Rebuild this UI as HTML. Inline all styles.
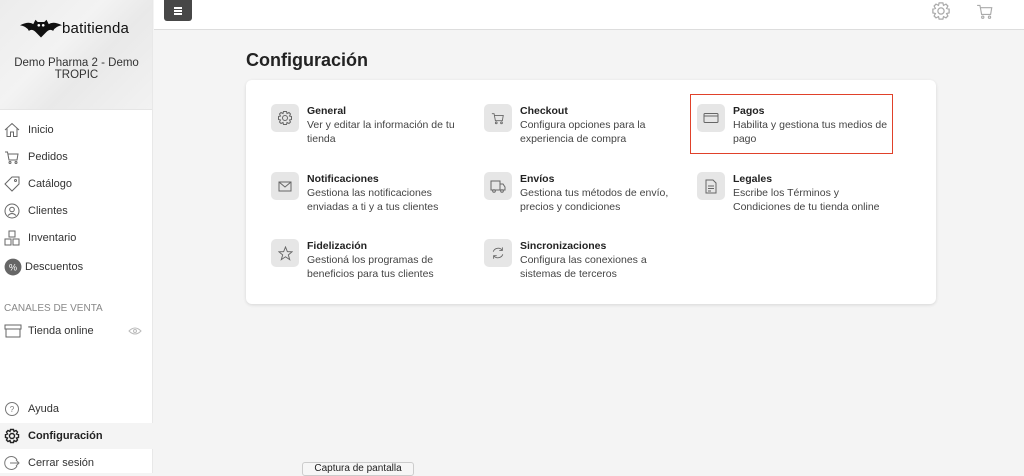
<!DOCTYPE html>
<html><head><meta charset="utf-8"><style>
*{box-sizing:border-box;margin:0;padding:0}
body{width:1024px;height:473px;overflow:hidden;background:#f4f4f4;font-family:"Liberation Sans",sans-serif;position:relative;color:#333}
.side{position:absolute;left:0;top:0;width:153px;height:473px;background:#fff;border-right:1px solid #e8e8e8}
.logo{height:110px;background:linear-gradient(135deg,#ececec 0%,#f3f3f3 40%,#e9e9e9 60%,#f2f2f2 100%);position:relative;border-bottom:1px solid #e5e5e5}
.logo .name{position:absolute;left:62px;top:20px;font-size:15px;color:#111;letter-spacing:.2px}
.logo .store{position:absolute;left:0;width:153px;top:57px;text-align:center;font-size:11.5px;color:#333;line-height:12px}
.nav{position:absolute;left:0;font-size:11px;color:#333;width:153px;height:26px;display:flex;align-items:center}
.nav svg{position:absolute;left:4px}
.nav span{position:absolute;left:28px}
.hdr{position:absolute;left:154px;top:0;right:0;height:30px;background:#fff;border-bottom:1px solid #ddd}
.ham{position:absolute;left:164px;top:0;width:28px;height:21px;background:#474747;border-radius:0 0 3px 3px}
.ham i{position:absolute;left:10px;width:8px;height:1.5px;background:#fff}
h1{position:absolute;left:246px;top:50px;font-size:18px;font-weight:bold;color:#222}
.card{position:absolute;left:246px;top:80px;width:690px;height:224px;background:#fff;border-radius:6px;box-shadow:0 1px 3px rgba(0,0,0,.12)}
.it{position:absolute;width:200px}
.ic{position:absolute;left:0;top:0;width:28px;height:28px;background:#e6e6e6;border-radius:5px;display:flex;align-items:center;justify-content:center}
.tx{position:absolute;left:36px;top:0;font-size:10.5px;line-height:14px;color:#444;width:165px}
.tx b{display:block;color:#222;font-size:10.5px}
.red{position:absolute;left:690px;top:94px;width:203px;height:60px;border:1.5px solid #e0412a}
.tip{position:absolute;left:302px;top:462px;width:112px;height:14px;background:#f6f6f6;border:1px solid #ccc;border-radius:3px;font-size:10px;text-align:center;color:#222}
</style></head><body>
<div class="side">
 <div class="logo">
  <svg style="position:absolute;left:20px;top:16px" width="42" height="23" viewBox="0 0 38 20"><path d="M0 8 Q8 4 12 7 L14 3 L16 5 L22 5 L24 3 L26 7 Q30 4 38 8 Q32 9 30 13 Q27 11 24 14 L19 19 L14 14 Q11 11 8 13 Q6 9 0 8Z" fill="#111"/><circle cx="17" cy="8" r="1.2" fill="#fff"/><circle cx="21" cy="8" r="1.2" fill="#fff"/></svg>
  <div class="name">batitienda</div>
  <div class="store">Demo Pharma 2 - Demo<br>TROPIC</div>
 </div>
 <div class="nav" style="top:117px"><svg width="16" height="16" viewBox="0 0 16 16" fill="none" stroke="#666"><path d="M1 8 L8 1.5 L15 8 M3 6.5 V14.5 H6.5 V10 H9.5 V14.5 H13 V6.5"/></svg><span>Inicio</span></div>
 <div class="nav" style="top:144px"><svg width="16" height="16" viewBox="0 0 16 16" fill="none" stroke="#666"><path d="M1 3 H3.5 L5 11 H13 L14 5 H4"/><circle cx="6" cy="13.5" r="1"/><circle cx="12" cy="13.5" r="1"/></svg><span>Pedidos</span></div>
 <div class="nav" style="top:171px"><svg width="16" height="16" viewBox="0 0 16 16" fill="none" stroke="#666"><path d="M1 8 L8 1 H15 V8 L8 15Z"/><circle cx="11.5" cy="4.5" r="1"/></svg><span>Catálogo</span></div>
 <div class="nav" style="top:198px"><svg width="16" height="16" viewBox="0 0 16 16" fill="none" stroke="#666"><circle cx="8" cy="8" r="7"/><circle cx="8" cy="6.5" r="2.3"/><path d="M4 12.5 Q8 8.5 12 12.5"/></svg><span>Clientes</span></div>
 <div class="nav" style="top:225px"><svg width="16" height="16" viewBox="0 0 16 16" fill="none" stroke="#666"><rect x="5" y="1" width="6" height="6"/><rect x="1" y="9" width="6" height="6"/><rect x="9" y="9" width="6" height="6"/></svg><span>Inventario</span></div>
 <div class="nav" style="top:254px"><svg width="18" height="18" viewBox="0 0 16 16"><circle cx="8" cy="8" r="7.5" fill="#666"/><text x="8" y="11" font-size="8" fill="#fff" text-anchor="middle" font-family="Liberation Sans">%</text></svg><span style="left:25px">Descuentos</span></div>
 <div style="position:absolute;left:4px;top:303px;font-size:10px;color:#888">CANALES DE VENTA</div>
 <div class="nav" style="top:318px"><svg width="18" height="16" viewBox="0 0 18 16" fill="none" stroke="#666"><rect x="1" y="2" width="16" height="4"/><path d="M2 6 V14 H16 V6"/></svg><span>Tienda online</span><svg style="left:128px" width="14" height="10" viewBox="0 0 14 10" fill="none" stroke="#bbb"><path d="M1 5 Q7 -1 13 5 Q7 11 1 5Z"/><circle cx="7" cy="5" r="1.5"/></svg></div>
 <div class="nav" style="top:396px"><svg width="16" height="16" viewBox="0 0 16 16" fill="none" stroke="#777"><circle cx="8" cy="8" r="6.5"/><text x="8" y="11" font-size="8" fill="#777" stroke="none" text-anchor="middle" font-family="Liberation Sans">?</text></svg><span>Ayuda</span></div>
 <div class="nav" style="top:423px;background:#f4f4f4;font-weight:bold;color:#222"><svg width="16" height="16" viewBox="0 0 16 16" fill="none" stroke="#222" stroke-width="1.4"><circle cx="8" cy="8" r="2.5"/><path d="M6.5 1.5 H9.5 L10 3.5 L12 2.5 L13.5 4 L12.5 6 L14.5 6.5 V9.5 L12.5 10 L13.5 12 L12 13.5 L10 12.5 L9.5 14.5 H6.5 L6 12.5 L4 13.5 L2.5 12 L3.5 10 L1.5 9.5 V6.5 L3.5 6 L2.5 4 L4 2.5 L6 3.5Z"/></svg><span>Configuración</span></div>
 <div class="nav" style="top:450px"><svg width="16" height="16" viewBox="0 0 16 16" fill="none" stroke="#777"><path d="M13 5 A6.5 6.5 0 1 0 13 11 M6 8 H15 M12 5 L15 8 L12 11"/></svg><span>Cerrar sesión</span></div>
</div>
<div class="hdr">
 <svg style="position:absolute;left:777px;top:1px" width="20" height="20" viewBox="0 0 16 16" fill="none" stroke="#aaa"><circle cx="8" cy="8" r="2.5"/><path d="M6.5 1.5 H9.5 L10 3.5 L12 2.5 L13.5 4 L12.5 6 L14.5 6.5 V9.5 L12.5 10 L13.5 12 L12 13.5 L10 12.5 L9.5 14.5 H6.5 L6 12.5 L4 13.5 L2.5 12 L3.5 10 L1.5 9.5 V6.5 L3.5 6 L2.5 4 L4 2.5 L6 3.5Z"/></svg>
 <svg style="position:absolute;left:822px;top:2px" width="18" height="18" viewBox="0 0 16 16" fill="none" stroke="#aaa"><path d="M1 3 H3.5 L5 11 H13 L14 5 H4"/><circle cx="6" cy="13.5" r="1"/><circle cx="12" cy="13.5" r="1"/></svg>
</div>
<div class="ham"><i style="top:7px"></i><i style="top:10px"></i><i style="top:13px"></i></div>
<h1>Configuración</h1>
<div class="card">
 <div class="it" style="left:25px;top:24px"><div class="ic"><svg width="16" height="16" viewBox="0 0 16 16" fill="none" stroke="#666"><circle cx="8" cy="8" r="2.5"/><path d="M6.5 1.5 H9.5 L10 3.5 L12 2.5 L13.5 4 L12.5 6 L14.5 6.5 V9.5 L12.5 10 L13.5 12 L12 13.5 L10 12.5 L9.5 14.5 H6.5 L6 12.5 L4 13.5 L2.5 12 L3.5 10 L1.5 9.5 V6.5 L3.5 6 L2.5 4 L4 2.5 L6 3.5Z"/></svg></div><div class="tx"><b>General</b>Ver y editar la información de tu tienda</div></div>
 <div class="it" style="left:238px;top:24px"><div class="ic"><svg width="14" height="14" viewBox="0 0 16 16" fill="none" stroke="#666"><path d="M1 3 H3.5 L5 11 H13 L14 5 H4"/><circle cx="6" cy="13.5" r="1"/><circle cx="12" cy="13.5" r="1"/></svg></div><div class="tx"><b>Checkout</b>Configura opciones para la experiencia de compra</div></div>
 <div class="it" style="left:451px;top:24px"><div class="ic"><svg width="16" height="12" viewBox="0 0 16 12" fill="none" stroke="#666"><rect x="1" y="1.5" width="14" height="9" rx="1"/><path d="M1 4 H15"/></svg></div><div class="tx"><b>Pagos</b>Habilita y gestiona tus medios de pago</div></div>
 <div class="it" style="left:25px;top:92px"><div class="ic"><svg width="14" height="11" viewBox="0 0 14 11" fill="none" stroke="#666"><rect x="1" y="1" width="12" height="9"/><path d="M1 1 L7 6 L13 1"/></svg></div><div class="tx"><b>Notificaciones</b>Gestiona las notificaciones enviadas a ti y a tus clientes</div></div>
 <div class="it" style="left:238px;top:92px"><div class="ic"><svg width="16" height="13" viewBox="0 0 16 13" fill="none" stroke="#666"><path d="M1 1 H10 V10 H1Z M10 4 H13 L15 7 V10 H10"/><circle cx="4" cy="11" r="1.3" fill="#e6e6e6"/><circle cx="12" cy="11" r="1.3" fill="#e6e6e6"/></svg></div><div class="tx"><b>Envíos</b>Gestiona tus métodos de envío, precios y condiciones</div></div>
 <div class="it" style="left:451px;top:92px"><div class="ic"><svg width="12" height="15" viewBox="0 0 12 15" fill="none" stroke="#666"><path d="M1 1 H8 L11 4 V14 H1Z M3 7 H9 M3 9.5 H9 M3 12 H6"/></svg></div><div class="tx"><b>Legales</b>Escribe los Términos y Condiciones de tu tienda online</div></div>
 <div class="it" style="left:25px;top:159px"><div class="ic"><svg width="15" height="15" viewBox="0 0 16 16" fill="none" stroke="#666"><path d="M8 1 L10 6 L15 6.2 L11 9.5 L12.5 14.5 L8 11.5 L3.5 14.5 L5 9.5 L1 6.2 L6 6Z"/></svg></div><div class="tx"><b>Fidelización</b>Gestioná los programas de beneficios para tus clientes</div></div>
 <div class="it" style="left:238px;top:159px"><div class="ic"><svg width="14" height="14" viewBox="0 0 16 16" fill="none" stroke="#666"><path d="M2.5 6.5 A6 6 0 0 1 13 5 M13 1.5 V5 H9.5 M13.5 9.5 A6 6 0 0 1 3 11 M3 14.5 V11 H6.5"/></svg></div><div class="tx"><b>Sincronizaciones</b>Configura las conexiones a sistemas de terceros</div></div>
</div>
<div class="red"></div>
<div class="tip">Captura de pantalla</div>
</body></html>
